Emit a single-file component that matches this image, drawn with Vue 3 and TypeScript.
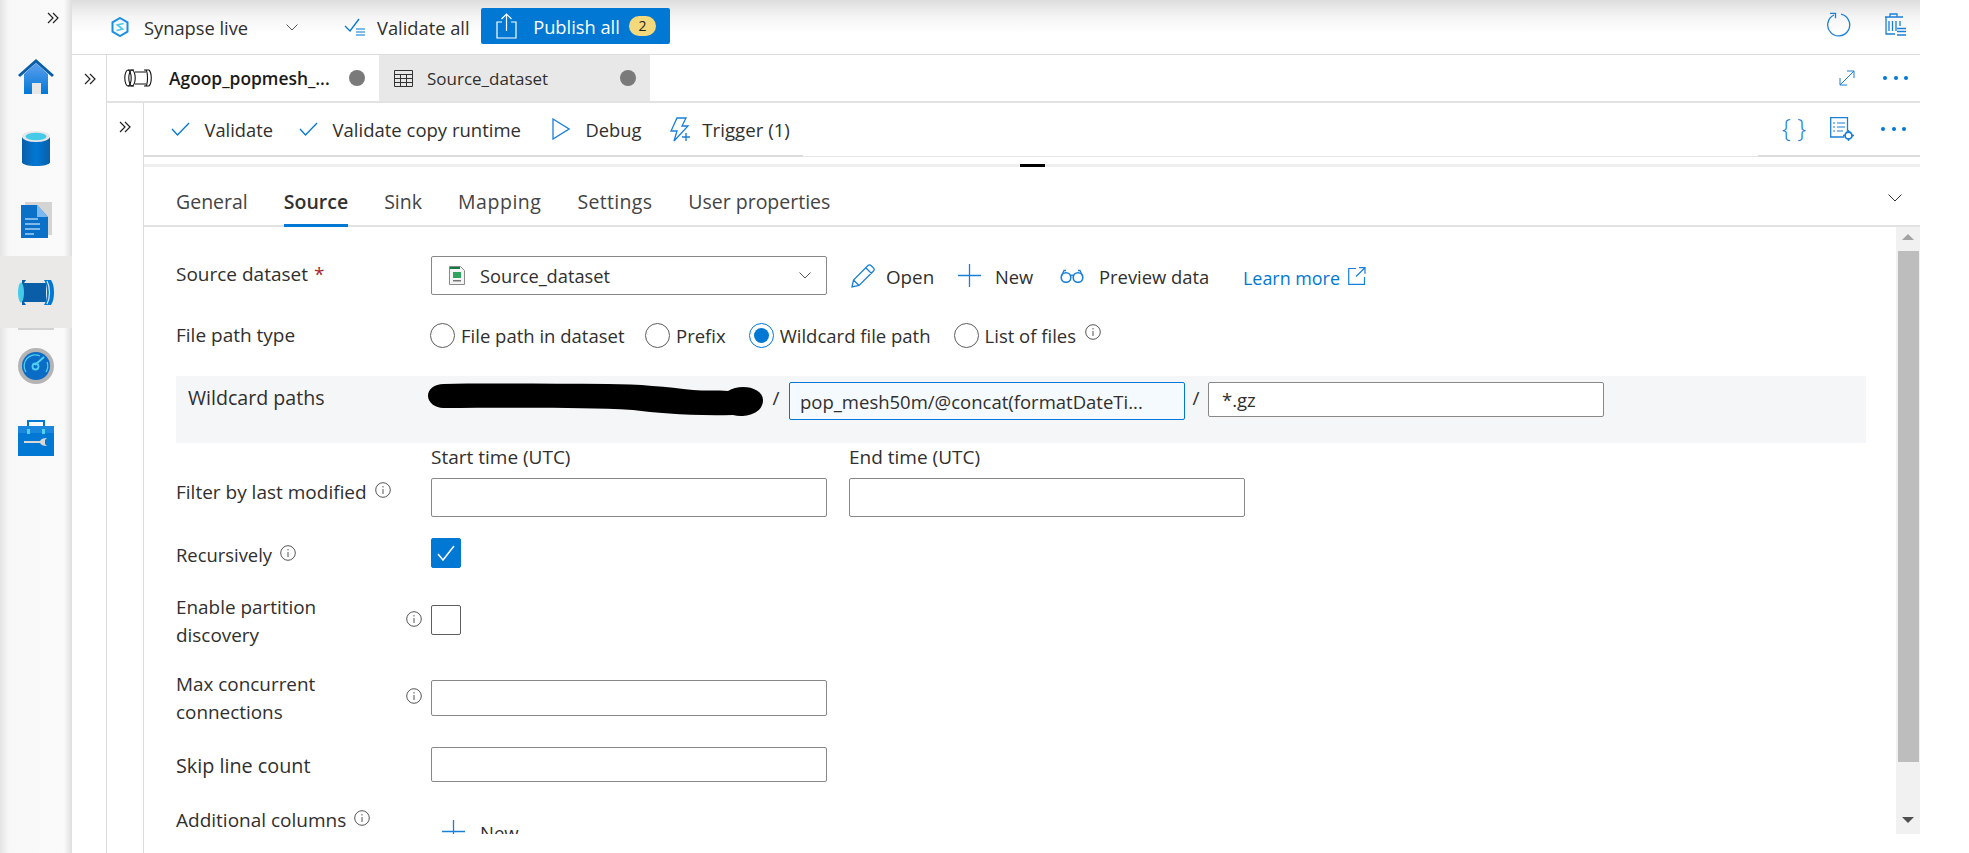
<script setup lang="ts">
const tabs: { name: string; active?: boolean }[] = [
  { name: 'General' },
  { name: 'Source', active: true },
  { name: 'Sink' },
  { name: 'Mapping' },
  { name: 'Settings' },
  { name: 'User properties' }
]
const radios: { name: string; on?: boolean }[] = [
  { name: 'File path in dataset' },
  { name: 'Prefix' },
  { name: 'Wildcard file path', on: true },
  { name: 'List of files' }
]
</script>

<template>
  <div class="page">
    <aside class="rail">
      <svg class="dbl rail-dbl" viewBox="0 0 14 12"><path d="M2 1l5 5-5 5M7 1l5 5-5 5" /></svg>
      <svg class="home" width="36" height="35" viewBox="0 0 36 35">
        <defs><linearGradient id="hg" x1="0" y1="0" x2="0" y2="1"><stop offset="0" stop-color="#5ea0ef" /><stop offset="1" stop-color="#0078d4" /></linearGradient></defs>
        <path d="M6 15L18 4l12 11v20H6z" fill="url(#hg)" />
        <path d="M1 17L18 2l17 15" fill="none" stroke="#0a5ea8" stroke-width="3" />
        <rect x="14" y="24" width="9" height="11" fill="#e6e6e6" />
      </svg>
      <svg class="db" width="28" height="35" viewBox="0 0 28 35">
        <defs><linearGradient id="dg" x1="0" y1="0" x2="1" y2="0"><stop offset="0" stop-color="#0a5ea8" /><stop offset=".5" stop-color="#0078d4" /><stop offset="1" stop-color="#0a5ea8" /></linearGradient></defs>
        <path d="M0 6v25c0 2.5 6 4 14 4s14-1.500 14-4V6z" fill="url(#dg)" />
        <ellipse cx="14" cy="5.500" rx="14" ry="5.500" fill="#e8e8e8" />
        <ellipse cx="14" cy="5.500" rx="10.500" ry="3.800" fill="#45cbe8" />
      </svg>
      <svg class="doc" width="31" height="37" viewBox="0 0 31 37">
        <rect x="4" y="0" width="27" height="33" fill="#d4d4d4" />
        <path d="M0 3h16l11 12v21H0z" fill="#0a70c8" />
        <path d="M16 3l11 12H16z" fill="#7db8f0" />
        <path d="M4 17h13M4 22h15M4 27h15M4 32h9" stroke="#a9d0f5" stroke-width="1.300" />
      </svg>
      <div class="rail-sel">
        <svg width="36" height="25" viewBox="0 0 36 25">
          <path d="M6 3h22v19H6z" fill="#0a5ea8" />
          <path d="M4 0h4l-2 3v19l2 3H4z" fill="#0a5ea8" />
          <path d="M26 0h7c2 3 3 7 3 12.500S35 22 33 25h-7c2-3 3-7 3-12.500S28 3 26 0z" fill="#0078d4" />
          <path d="M29 1c1.600 3 2.500 7 2.500 11.500S30.600 21 29 24" fill="none" stroke="#e8e8e8" stroke-width="1.200" />
          <ellipse cx="3" cy="12.500" rx="3" ry="10" fill="#45cbe8" />
        </svg>
      </div>
      <div class="rail-under"></div>
      <svg class="gauge" width="36" height="36" viewBox="0 0 36 36">
        <circle cx="18" cy="18" r="18" fill="#b4b4b4" />
        <circle cx="18" cy="18" r="14" fill="#0a6cc4" />
        <path d="M8 24A11 11 0 0 1 22 8M29 14a11 11 0 0 1-1 10" fill="none" stroke="#50d0f0" stroke-width="1.300" />
        <path d="M17 17l9-8" stroke="#50d0f0" stroke-width="2" />
        <circle cx="17.500" cy="18.500" r="3" fill="none" stroke="#50d0f0" stroke-width="1.800" />
      </svg>
      <svg class="tool" width="36" height="36" viewBox="0 0 36 36">
        <path d="M10 6V1h16v5" fill="none" stroke="#0078d4" stroke-width="2" />
        <rect x="0" y="6" width="36" height="30" fill="#0078d4" />
        <rect x="0" y="6" width="36" height="7" fill="#1a86de" />
        <rect x="9" y="9" width="3" height="5" fill="#50d0f0" />
        <rect x="24" y="9" width="3" height="5" fill="#50d0f0" />
        <path d="M6 21h16c1-2 3-3 7-3l-2 2v4l2 2c-4 0-6-1-7-3H6z" fill="#d8d8d8" />
      </svg>
    </aside>

    <div class="app">
      <header class="topbar">
        <svg class="t-syn" width="18" height="20" viewBox="0 0 18 20">
          <path d="M9 1l7.500 4.300v9.400L9 19l-7.500-4.300V5.300z" fill="none" stroke="#1a8fe0" stroke-width="2" />
          <path d="M12.500 6.500L6.500 8 11.500 12 5.500 13.500" fill="none" stroke="#50c8ec" stroke-width="1.800" />
        </svg>
        <span class="t-name">Synapse live</span>
        <svg class="t-chev" width="12" height="7" viewBox="0 0 12 7"><path d="M.5.500L6 6l5.500-5.500" /></svg>
        <svg class="t-val" width="22" height="18" viewBox="0 0 22 18">
          <path d="M1 8l5 5L15 1" fill="none" stroke="#0078d4" stroke-width="1.300" />
          <path d="M12 11h9M12 14h9M12 17h9" stroke="#0078d4" stroke-width="1.200" />
        </svg>
        <span class="t-valtxt">Validate all</span>
        <button class="publish">
          <svg width="21" height="26" viewBox="0 0 21 26">
            <path d="M6 9H1v16h19V9h-5M10.500 18V1M5.500 6l5-5 5 5" fill="none" stroke="#fff" stroke-width="1.200" />
          </svg>
          <span class="p-txt">Publish all</span>
          <span class="badge">2</span>
        </button>
        <svg class="t-ref" width="24" height="25" viewBox="0 0 24 25">
          <path d="M7 3A11 11 0 1 0 14 2.200" fill="none" stroke="#1a7fd8" stroke-width="1.300" />
          <path d="M3 1.300h5.500v5" fill="none" stroke="#1a7fd8" stroke-width="1.300" />
        </svg>
        <svg class="t-trash" width="22" height="24" viewBox="0 0 22 24">
          <path d="M1 4h18M6 4V1h7v3M2 4v17h9M5 8v10M8.500 8v10M12 8v10M16 8v5" fill="none" stroke="#1a7fd8" stroke-width="1.300" />
          <path d="M13 15.500h9M13 18.500h9M13 22h9" stroke="#1a7fd8" stroke-width="1.400" />
        </svg>
      </header>

      <div class="work">
        <div class="col1">
          <svg class="dbl" viewBox="0 0 14 12"><path d="M2 1l5 5-5 5M7 1l5 5-5 5" /></svg>
        </div>
        <div class="center">
          <div class="tabbar">
            <div class="tab tab-on">
              <svg width="29" height="18" viewBox="0 0 29 18">
                <ellipse cx="4" cy="9" rx="3.200" ry="8" fill="none" stroke="#111" stroke-width="1.100" />
                <ellipse cx="8" cy="9" rx="3.200" ry="8" fill="none" stroke="#111" stroke-width="1.100" />
                <path d="M11 3h11M11 15h11M4 1h6M4 17h6M20 1h5M20 17h5" fill="none" stroke="#111" stroke-width="1.100" />
                <path d="M22 1c2 3 2 13 0 16M25 1c3 3 3 13 0 16" fill="none" stroke="#111" stroke-width="1.100" />
              </svg>
              <span class="tab-name strong">Agoop_popmesh_...</span>
              <span class="dot"></span>
            </div>
            <div class="tab tab-off">
              <svg width="19" height="17" viewBox="0 0 19 17">
                <path d="M.500.500h18v16H.500zM.500 4.500h18M.500 8.500h18M.500 12.500h18M6.500 4.500v12M12.500 4.500v12" fill="none" stroke="#333" stroke-width="1" />
              </svg>
              <span class="tab-name">Source_dataset</span>
              <span class="dot"></span>
            </div>
            <svg class="tb-exp" width="16" height="16" viewBox="0 0 16 16">
              <path d="M1 15L15 1M8 1h7v7M1 8v7h7" fill="none" stroke="#1a7fd8" stroke-width="1" />
            </svg>
            <div class="dots tb-dots"><i></i><i></i><i></i></div>
          </div>
          <div class="under">
            <div class="col2">
              <svg class="dbl" viewBox="0 0 14 12"><path d="M2 1l5 5-5 5M7 1l5 5-5 5" /></svg>
            </div>
            <div class="pane">
              <div class="toolbar">
                <svg class="a-ck1" width="19" height="14" viewBox="0 0 19 14"><path d="M1 7l5.500 6L18 1" fill="none" stroke="#0078d4" stroke-width="1.300" /></svg>
                <span class="a-t1">Validate</span>
                <svg class="a-ck2" width="19" height="14" viewBox="0 0 19 14"><path d="M1 7l5.500 6L18 1" fill="none" stroke="#0078d4" stroke-width="1.300" /></svg>
                <span class="a-t2">Validate copy runtime</span>
                <svg class="a-play" width="18" height="22" viewBox="0 0 18 22"><path d="M1 1l16 10L1 21z" fill="none" stroke="#1a7fd8" stroke-width="1.300" /></svg>
                <span class="a-t3">Debug</span>
                <svg class="a-bolt" width="22" height="25" viewBox="0 0 22 25">
                  <path d="M8 1h9l-4 8h6L5 24l3-10H2z" fill="none" stroke="#1a7fd8" stroke-width="1.300" />
                  <path d="M13 20h8M17 16v8" stroke="#1a7fd8" stroke-width="1.400" />
                </svg>
                <span class="a-t4">Trigger (1)</span>
                <span class="a-brace">{ }</span>
                <svg class="a-set" width="24" height="24" viewBox="0 0 24 24">
                  <path d="M14 20H.700V.700h16.800V14" fill="none" stroke="#1a7fd8" stroke-width="1.300" />
                  <path d="M3 6h2M7 6h8M3 10h2M7 10h8M3 14h2M7 14h6" stroke="#1a7fd8" stroke-width="1.200" />
                  <circle cx="18.500" cy="18.500" r="3.500" fill="none" stroke="#1a7fd8" stroke-width="1.800" />
                  <path d="M18.500 13v2M18.500 22v2M13 18.500h2M22 18.500h2" stroke="#1a7fd8" stroke-width="1.400" />
                </svg>
                <div class="dots ab-dots"><i></i><i></i><i></i></div>
              </div>
              <div class="band"><span class="grip"></span></div>
              <nav class="subtabs">
                <span v-for="t in tabs" :key="t.name" class="subtab" :class="{ on: t.active }">{{ t.name }}</span>
                <svg class="st-chev" width="14" height="8" viewBox="0 0 14 8"><path d="M.500.500L7 7 13.500.500" /></svg>
              </nav>
              <div class="scroller">
                <div class="form">
                  <div class="row r-src">
                    <div class="lab lab-src">Source dataset <b>*</b></div>
                    <div class="ctl ctl-row">
                      <div class="select">
                        <svg width="16" height="19" viewBox="0 0 16 19">
                          <path d="M.500.500h11l4 4v14H.500z" fill="#f4f4f4" stroke="#8a8a8a" />
                          <rect x="1" y="1" width="10" height="2" fill="#107c41" />
                          <rect x="4" y="6" width="8" height="6" fill="#2fa35f" />
                          <rect x="4" y="14" width="8" height="1.500" fill="#777" />
                        </svg>
                        <span>Source_dataset</span>
                        <svg class="sel-chev" width="12" height="7" viewBox="0 0 12 7"><path d="M.500.500L6 6l5.500-5.500" /></svg>
                      </div>
                      <svg class="i-pen" width="24" height="24" viewBox="0 0 24 24">
                        <path d="M1 23l1.500-7L17 1.500a2 2 0 0 1 3 0l2.500 2.500a2 2 0 0 1 0 3L8 21.500zM15 4l5.500 5.500M2.500 16L8 21.500" fill="none" stroke="#1a7fd8" stroke-width="1.300" />
                      </svg>
                      <span class="t-open">Open</span>
                      <svg class="i-plus" width="23" height="23" viewBox="0 0 23 23"><path d="M0 11.500h23M11.500 0v23" stroke="#1a7fd8" stroke-width="1.300" /></svg>
                      <span class="t-new">New</span>
                      <svg class="i-gl" width="24" height="14" viewBox="0 0 24 14">
                        <circle cx="6" cy="8.500" r="4.800" fill="none" stroke="#1a7fd8" stroke-width="1.600" />
                        <circle cx="18" cy="8.500" r="4.800" fill="none" stroke="#1a7fd8" stroke-width="1.600" />
                        <path d="M10 7c1-1 3-1 4 0M1.500 7L4 1.500h2M22.500 7L20 1.500h-2" fill="none" stroke="#1a7fd8" stroke-width="1.300" />
                      </svg>
                      <span class="t-prev">Preview data</span>
                      <span class="t-learn">Learn more</span>
                      <svg class="i-ext" width="18" height="18" viewBox="0 0 18 18">
                        <path d="M8 1.500H.700v15.800h15.800V10M11 .700h6v6M17 .700L8 9.500" fill="none" stroke="#1a7fd8" stroke-width="1.200" />
                      </svg>
                    </div>
                  </div>

                  <div class="row r-path">
                    <div class="lab">File path type</div>
                    <div class="ctl radios">
                      <label v-for="r in radios" :key="r.name" class="radio" :class="{ on: r.on }">
                        <span class="ring"><span v-if="r.on" class="pip"></span></span>
                        <span>{{ r.name }}</span>
                      </label>
                      <svg class="info" viewBox="0 0 16 16"><circle cx="8" cy="8" r="7.300" /><path d="M8 7v5M8 4v1.500" /></svg>
                    </div>
                  </div>

                  <div class="row r-wild">
                    <div class="lab lab-wild">Wildcard paths</div>
                    <div class="ctl wild">
                      <svg class="scribble" width="335" height="33" viewBox="0 0 335 33">
                        <path d="M16 1C60 0 120 1 180 1c30 0 60 3 85 6 10 1 25 0 35 1 12-8 35-4 35 9 0 14-18 18-30 15-45 1-75-2-100-5-55-3-120-2-190-2C8 25 0 20 0 13 0 6 6 1 16 1z" fill="#000" />
                      </svg>
                      <span class="slash s1">/</span>
                      <div class="pinput focus">pop_mesh50m/@concat(formatDateTi...</div>
                      <span class="slash s2">/</span>
                      <div class="pinput gz">*.gz</div>
                    </div>
                  </div>

                  <div class="row r-time">
                    <div class="lab lab-filter">Filter by last modified <svg class="info" viewBox="0 0 16 16"><circle cx="8" cy="8" r="7.300" /><path d="M8 7v5M8 4v1.500" /></svg></div>
                    <div class="times">
                      <div class="time"><div class="time-l">Start time (UTC)</div><div class="box box-t"></div></div>
                      <div class="time"><div class="time-l">End time (UTC)</div><div class="box box-t"></div></div>
                    </div>
                  </div>

                  <div class="row r-rec">
                    <div class="lab">Recursively <svg class="info" viewBox="0 0 16 16"><circle cx="8" cy="8" r="7.300" /><path d="M8 7v5M8 4v1.500" /></svg></div>
                    <div class="check on">
                      <svg width="20" height="18" viewBox="0 0 20 18"><path d="M2 10l5 6L18 2" fill="none" stroke="#fff" stroke-width="1.500" /></svg>
                    </div>
                  </div>

                  <div class="row r-part">
                    <div class="lab lab-two">
                      <span>Enable partition discovery</span>
                      <svg class="info tall" viewBox="0 0 16 16"><circle cx="8" cy="8" r="7.300" /><path d="M8 7v5M8 4v1.500" /></svg>
                    </div>
                    <div class="check"></div>
                  </div>

                  <div class="row r-max">
                    <div class="lab lab-two">
                      <span>Max concurrent connections</span>
                      <svg class="info tall" viewBox="0 0 16 16"><circle cx="8" cy="8" r="7.300" /><path d="M8 7v5M8 4v1.500" /></svg>
                    </div>
                    <div class="box box-m"></div>
                  </div>

                  <div class="row r-skip">
                    <div class="lab">Skip line count</div>
                    <div class="box box-s"></div>
                  </div>

                  <div class="row r-add">
                    <div class="lab">Additional columns <svg class="info" viewBox="0 0 16 16"><circle cx="8" cy="8" r="7.300" /><path d="M8 7v5M8 4v1.500" /></svg></div>
                    <div class="add">
                      <svg width="23" height="23" viewBox="0 0 23 23"><path d="M0 11.500h23M11.500 0v23" stroke="#1a7fd8" stroke-width="1.300" /></svg>
                      <span>New</span>
                    </div>
                  </div>
                </div>
                <div class="sbar">
                  <span class="sb-up"></span>
                  <span class="sb-thumb"></span>
                  <span class="sb-down"></span>
                </div>
              </div>
            </div>
          </div>
        </div>
      </div>
    </div>
  </div>
</template>

<style>
html, body { margin: 0; background: #fff; }
</style>

<style scoped>
.page {
  width: 1969px; height: 853px; display: flex; overflow: hidden; background: #fff;
  font-family: "Open Sans", "Noto Sans", sans-serif; font-size: 18.300px; color: #302f2e;
}
svg { display: block; flex: none; }
.dbl { width: 14px; height: 12px; fill: none; stroke: #222; stroke-width: 1.200; }

/* rail */
.rail {
  width: 72px; flex: none; display: flex; flex-direction: column; align-items: center;
  background: linear-gradient(90deg, #e4e4e4 0, #f8f8f8 9px, #fafafa 64px, #dedede 72px);
}
.rail-dbl { align-self: flex-end; margin: 12px 12px 0 0; }
.home { margin-top: 35px; }
.db { margin-top: 37px; }
.doc { margin-top: 36px; }
.rail-sel { align-self: stretch; height: 72px; margin-top: 17px; background: #eae9e8; display: flex; align-items: center; justify-content: center; }
.rail-under { width: 36px; height: 2px; background: #d2d2d2; }
.gauge { margin-top: 18px; }
.tool { margin-top: 36px; }

/* top */
.app { width: 1848px; flex: none; display: flex; flex-direction: column; }
.topbar {
  height: 54px; flex: none; display: flex; align-items: center; box-sizing: content-box;
  border-bottom: 1px solid #dcdcdc; background: linear-gradient(180deg, #dddddd 0, #f4f4f4 16px, #ffffff 34px);
}
.t-syn { margin-left: 39px; }
.t-name { margin-left: 15px; width: 104px; white-space: nowrap; }
.t-chev, .sel-chev, .st-chev { fill: none; stroke: #555; stroke-width: 1; }
.t-chev { margin-left: 38px; }
.t-val { margin-left: 46px; color: #0078d4; }
.t-valtxt { margin-left: 11px; width: 92px; white-space: nowrap; }
.publish {
  margin-left: 12px; width: 189px; height: 36px; margin-top: -2px; border: 0; border-radius: 2px; background: #0078d4; color: #fff; padding: 0 0 0 15px;
  display: flex; align-items: center; font: inherit;
}
.p-txt { margin-left: 15px; width: 89px; white-space: nowrap; }
.badge { margin-left: 8px; width: 27px; height: 20px; border-radius: 10px; background: #f3d97c; color: #222; font-size: 14px; line-height: 20px; text-align: center; }
.t-ref { margin-left: auto; margin-top: -5px; }
.t-trash { margin-left: 33px; margin-right: 14px; margin-top: -5px; }

/* work */
.work { flex: 1; display: flex; min-height: 0; }
.col1 { width: 35px; flex: none; box-sizing: border-box; border-right: 1px solid #dcdcdc; padding: 18px 0 0 11px; }
.center { flex: 1; min-width: 0; display: flex; flex-direction: column; }
.tabbar { height: 46px; flex: none; display: flex; align-items: center; border-bottom: 2px solid #e2e2e2; }
.tab { height: 46px; width: 272px; flex: none; box-sizing: border-box; display: flex; align-items: center; position: relative; }
.tab-on { padding-left: 17px; background: #fff; }
.tab-off { width: 271px; padding-left: 15px; background: #e8e8e8; }
.tab-name { margin-left: 14px; white-space: nowrap; font-size: 17px; }
.tab-on .tab-name { margin-left: 16px; font-size: 17.400px; }
.strong { font-weight: 600; color: #1b1a19; }
.dot { position: absolute; top: 15px; left: 242px; width: 16px; height: 16px; border-radius: 50%; background: #7a7a7a; }
.tab-off .dot { left: 241px; }
.tb-exp { margin-left: auto; margin-right: -1px; margin-top: -1px; }
.dots { display: flex; gap: 6.500px; align-items: center; }
.dots i { width: 4px; height: 4px; border-radius: 50%; background: #0078d4; }
.tb-dots { margin-left: 29px; margin-right: 12px; }
.under { flex: 1; display: flex; min-height: 0; }
.col2 { width: 37px; flex: none; box-sizing: border-box; border-right: 1px solid #dcdcdc; padding: 18px 0 0 11px; }
.pane { flex: 1; min-width: 0; display: flex; flex-direction: column; }

/* toolbar */
.toolbar {
  height: 54px; flex: none; box-sizing: border-box; display: flex; align-items: center;
  background: linear-gradient(90deg, #dcdcdc 0, #dcdcdc 100%) no-repeat left bottom / 659px 2px,
    linear-gradient(90deg, #dcdcdc 0, #dcdcdc 100%) no-repeat right bottom / 162px 2px,
    linear-gradient(90deg, #e6e6e6 0, #e6e6e6 100%) no-repeat left bottom / 100% 1px;
  padding-bottom: 2px;
}
.a-ck1 { margin-left: 26.500px; }
.a-t1 { margin-left: 15px; width: 68px; white-space: nowrap; }
.a-ck2 { margin-left: 26px; }
.a-t2 { margin-left: 15px; width: 187px; white-space: nowrap; font-size: 18.500px; }
.a-play { margin-left: 32px; }
.a-t3 { margin-left: 16px; width: 57px; white-space: nowrap; }
.a-bolt { margin-left: 26.750px; }
.a-t4 { margin-left: 11px; width: 90px; white-space: nowrap; font-size: 18.700px; }
.a-brace { margin-left: auto; color: #1a7fd8; font-size: 25px; font-weight: 300; width: 26px; white-space: nowrap; line-height: 1; margin-top: -4px; }
.a-set { margin-left: 22px; }
.ab-dots { margin-left: 27px; margin-right: 14px; }

.band { height: 3px; margin-top: 7px; flex: none; background: #efefef; display: flex; padding-left: 876px; }
.grip { width: 25px; height: 3px; background: #000; }

.subtabs { height: 60px; flex: none; box-sizing: border-box; display: flex; align-items: flex-start; border-bottom: 2px solid #e2e2e2; padding-left: 32px; gap: 36px; position: relative; color: #444; font-size: 19.500px; }
.subtab { height: 60px; box-sizing: border-box; padding-top: 21px; white-space: nowrap; line-height: 28px; }
.subtab:nth-child(4) { letter-spacing: .55px; }
.subtab:nth-child(5) { letter-spacing: .3px; }
.subtab.on { font-weight: 600; color: #323130; border-bottom: 3px solid #0078d4; }
.st-chev { margin-left: auto; margin-top: 27px; margin-right: 18px; stroke: #333; }

/* form */
.scroller { height: 607px; flex: none; display: flex; overflow: hidden; }
.form { flex: 1; min-width: 0; box-sizing: border-box; padding: 29px 30px 0 32px; }
.row { display: grid; grid-template-columns: 255px 1fr; align-items: start; }
.lab { display: flex; align-items: center; gap: 8px; white-space: nowrap; font-size: 19px; line-height: 28px; }
.lab b { color: #a4262c; font-weight: 400; margin-left: -2px; }
.info { width: 16px; height: 16px; flex: none; fill: none; stroke: #555; stroke-width: 1; margin-top: -4px; }

.r-src { height: 39px; }
.lab-src { margin-top: 4px; }
.ctl-row { display: flex; align-items: center; height: 39px; }
.select {
  width: 396px; height: 39px; flex: none; box-sizing: border-box; border: 1px solid #8a8886; border-radius: 2px;
  display: flex; align-items: center; padding-left: 17px;
}
.select span { margin-left: 15px; font-size: 18.250px; }
.sel-chev { margin-left: auto; margin-right: 15px; }
.i-pen { margin-left: 24px; }
.t-open { margin-left: 11px; width: 48px; font-size: 18.800px; margin-top: 2px; }
.i-plus { margin-left: 24px; }
.t-new { margin-left: 14px; width: 38px; font-size: 18.300px; margin-top: 2px; }
.i-gl { margin-left: 27px; }
.t-prev { margin-left: 15px; width: 109px; font-size: 18.400px; white-space: nowrap; margin-top: 2px; }
.t-learn { margin-left: 35px; width: 97px; color: #0078d4; font-size: 17.900px; white-space: nowrap; margin-top: 4px; }
.i-ext { margin-left: 8px; }

.r-path { height: 26px; margin-top: 27px; }
.r-path .lab { line-height: 26px; }
.radios { display: flex; align-items: center; height: 26px; margin-left: -1px; }
.radio { display: flex; align-items: center; gap: 6px; font-size: 18.500px; white-space: nowrap; margin-right: 23px; }
.radio:first-child { margin-right: 20.500px; }
.ring { width: 25px; height: 25px; box-sizing: border-box; border: 1px solid #605e5c; border-radius: 50%; display: flex; align-items: center; justify-content: center; }
.radio.on .ring { border-color: #0078d4; }
.pip { width: 15px; height: 15px; border-radius: 50%; background: #0078d4; }
.radios .info { margin-left: -14px; margin-top: -6px; }

.r-wild { height: 67px; margin-top: 28px; background: #f5f6f8; }
.lab-wild { padding-left: 12px; margin-top: 8px; font-size: 19.600px; }
.wild { display: flex; align-items: flex-start; padding-top: 6px; margin-left: -3px; }
.scribble { margin-top: 1px; }
.slash { font-size: 19px; line-height: 28px; width: 12px; text-align: center; }
.s1 { margin-left: 7px; margin-top: 2px; }
.s2 { margin-left: 5px; margin-top: 2px; }
.pinput { box-sizing: border-box; height: 38px; border-radius: 2px; font-size: 18.500px; white-space: nowrap; display: flex; align-items: center; padding-left: 10px; }
.focus { width: 396px; margin-left: 7px; border: 1px solid #0078d4; background: #f5faff; }
.gz { width: 396px; height: 35px; margin-left: 6px; border: 1px solid #8a8886; background: #fff; padding-left: 13px; }

.r-time { align-items: end; }
.lab-filter { margin-bottom: 11px; }
.times { display: flex; gap: 22px; }
.time { width: 396px; }
.time-l { height: 35px; line-height: 28px; font-size: 19px; white-space: nowrap; }
.box { box-sizing: border-box; border: 1px solid #8a8886; border-radius: 2px; background: #fff; width: 396px; }
.box-t { height: 39px; }

.r-rec { margin-top: 21px; height: 30px; }
.r-rec .lab { margin-top: 3px; font-size: 18.400px; }
.check { width: 30px; height: 30px; box-sizing: border-box; border: 1px solid #605e5c; border-radius: 2px; }
.check.on { background: #0078d4; border-color: #0078d4; display: flex; align-items: center; justify-content: center; }

.r-part { margin-top: 26px; height: 56px; }
.r-part .check { margin-top: 11px; }
.lab-two { align-items: flex-start; white-space: normal; justify-content: space-between; padding-right: 9px; box-sizing: border-box; font-size: 18.900px; line-height: 27.500px; }
.lab-two span { width: 180px; }
.info.tall { margin-top: 17px; }

.r-max { margin-top: 21px; height: 56px; }
.box-m { height: 36px; margin-top: 9px; }

.r-skip { margin-top: 20px; height: 35px; }
.r-skip .lab { margin-top: 5px; font-size: 19.800px; }
.box-s { height: 35px; }

.r-add { margin-top: 24px; }
.add { display: flex; align-items: flex-start; gap: 15px; padding: 14px 0 0 11px; font-size: 18.500px; }

.sbar { width: 24px; flex: none; background: #f1f1f1; display: flex; flex-direction: column; align-items: center; }
.sb-up { width: 0; height: 0; margin-top: 7px; border: 6px solid transparent; border-top: 0; border-bottom: 6px solid #a3a3a3; }
.sb-thumb { width: 21px; height: 511px; margin-top: 11px; background: #bdbdbd; }
.sb-down { width: 0; height: 0; margin-top: 55px; border: 6px solid transparent; border-bottom: 0; border-top: 6px solid #505050; }
</style>
